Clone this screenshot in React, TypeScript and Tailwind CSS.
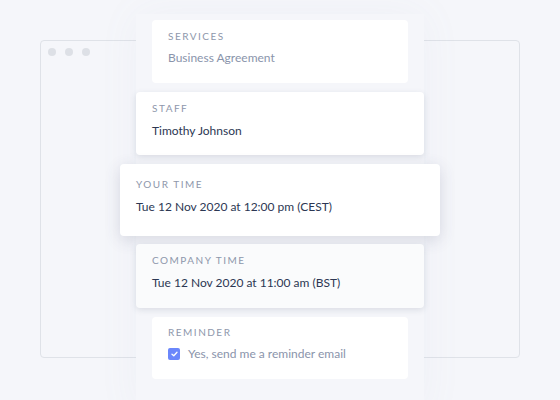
import React from "react";

const Label = ({ children }: { children: React.ReactNode }) => (
  <div className="text-[10px] leading-[12px] uppercase tracking-[0.15em] text-[#8e97ab]">{children}</div>
);

const App = () => {
  return (
    <div className="w-[560px] h-[400px] bg-[#f5f6fa] grid overflow-hidden font-['Lato','Noto_Sans',sans-serif]">
      {/* browser frame behind */}
      <div className="col-start-1 row-start-1 ml-[40px] mt-[40px] w-[480px] h-[318px] border border-[#dfe2e8] rounded-[4px] flex gap-[9px] pl-[7px] pt-[7px]">
        <span className="w-[8px] h-[8px] rounded-full bg-[#dde0e6]" />
        <span className="w-[8px] h-[8px] rounded-full bg-[#dde0e6]" />
        <span className="w-[8px] h-[8px] rounded-full bg-[#dde0e6]" />
      </div>

      {/* card stack */}
      <div className="col-start-1 row-start-1 justify-self-center w-[288px] h-[400px] mt-[14px] bg-[#f5f6fa] shadow-[0_0_40px_rgba(140,150,180,0.06)] flex flex-col items-center pt-[6px]">
        <div className="w-[256px] h-[63px] bg-white rounded-[4px] pl-[16px] pt-[10px]">
          <Label>Services</Label>
          <div className="mt-[8px] text-[12px] leading-[16px] text-[#8a94ab]">Business Agreement</div>
        </div>

        <div className="mt-[9px] w-[288px] h-[63px] bg-white rounded-[4px] pl-[16px] pt-[10px] shadow-[0_2px_6px_rgba(60,70,100,0.14)]">
          <Label>Staff</Label>
          <div className="mt-[9px] text-[12px] leading-[16px] text-[#2c3753]">Timothy Johnson</div>
        </div>

        <div className="mt-[9px] w-[320px] h-[72px] bg-white rounded-[4px] pl-[16px] pt-[14px] shadow-[0_4px_16px_rgba(60,70,100,0.16)]">
          <Label>Your time</Label>
          <div className="mt-[9px] text-[12px] leading-[16px] text-[#2c3753]">Tue 12 Nov 2020 at 12:00 pm (CEST)</div>
        </div>

        <div className="mt-[8px] w-[288px] h-[64px] bg-[#fafbfc] rounded-[4px] pl-[16px] pt-[10px] shadow-[0_2px_6px_rgba(60,70,100,0.14)]">
          <Label>Company time</Label>
          <div className="mt-[9px] text-[12px] leading-[16px] text-[#2c3753]">Tue 12 Nov 2020 at 11:00 am (BST)</div>
        </div>

        <div className="mt-[9px] w-[256px] h-[62px] bg-white rounded-[4px] pl-[16px] pt-[9px]">
          <Label>Reminder</Label>
          <div className="mt-[8px] flex items-center gap-[8px]">
            <span className="w-[12px] h-[12px] rounded-[2px] bg-[#6b87fb] flex items-center justify-center">
              <svg width="7" height="6" viewBox="0 0 7 6" fill="none">
                <path d="M1 3.2 L2.8 4.8 L6 1.2" stroke="white" strokeWidth="1.3" strokeLinecap="round" strokeLinejoin="round" />
              </svg>
            </span>
            <span className="text-[12px] leading-[16px] text-[#8a94ab]">Yes, send me a reminder email</span>
          </div>
        </div>
      </div>
    </div>
  );
};

export default App;
